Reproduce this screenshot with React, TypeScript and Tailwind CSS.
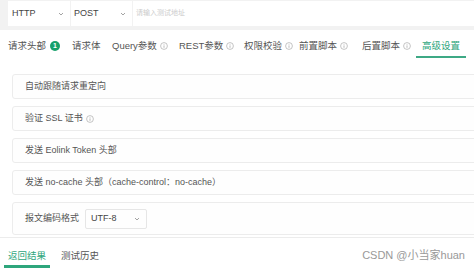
const font = "font-['Liberation_Sans','Noto_Sans_CJK_SC',sans-serif]";

function Chevron() {
  return (
    <svg width="6" height="4" viewBox="0 0 6 4" className="text-[#999]">
      <path d="M1 1l2 2 2-2" fill="none" stroke="currentColor" strokeWidth="0.9" />
    </svg>
  );
}

function Info() {
  return (
    <svg width="8" height="8" viewBox="0 0 8 8" className="ml-[3px] shrink-0 text-[#aaa]">
      <circle cx="4" cy="4" r="3.4" fill="none" stroke="currentColor" strokeWidth="0.7" />
      <path d="M4 3.4v2.4M4 2.2v0.6" stroke="currentColor" strokeWidth="0.8" />
    </svg>
  );
}

function Tab({ label, info, width }: { label: string; info?: boolean; width: string }) {
  return (
    <div className={`flex h-full shrink-0 items-center whitespace-nowrap border-b-2 border-transparent text-[#555] ${width}`}>
      <span>{label}</span>
      {info && <Info />}
    </div>
  );
}

function Card({ children, tall }: { children: React.ReactNode; tall?: boolean }) {
  return (
    <div
      className={`-mr-4 flex items-center whitespace-nowrap rounded-[3px] border border-[#ececec] bg-[#fefefe] pl-[12px] text-[9px] text-[#555] ${
        tall ? "h-[33px]" : "h-[25px]"
      }`}
    >
      {children}
    </div>
  );
}

export default function App() {
  return (
    <div className={`h-[268px] w-[474px] overflow-hidden bg-white ${font}`}>
      {/* address bar */}
      <div className="bg-[#f2f2f2] pl-[8px] pt-[1px] pb-[4px]">
        <div className="flex h-[25px] gap-px text-[9px] text-[#444]">
          <div className="flex w-[62px] items-center justify-between bg-white pl-[4px] pr-[6px]">
            <span>HTTP</span>
            <Chevron />
          </div>
          <div className="flex w-[61px] items-center justify-between bg-white pl-[3px] pr-[6px]">
            <span>POST</span>
            <Chevron />
          </div>
          <div className="flex flex-1 items-center bg-white pl-[3px] text-[7px] text-[#ccc]">
            请输入测试地址
          </div>
        </div>
      </div>

      {/* tabs */}
      <div className="flex h-[28px] items-end pl-[8px] pt-[6px] text-[9.5px]">
        <div className="flex h-full w-[64px] shrink-0 items-center whitespace-nowrap border-b-2 border-transparent text-[#555]">
          <span>请求头部</span>
          <span className="ml-[4px] flex h-[10px] w-[10px] items-center justify-center rounded-full bg-[#17a06b] text-[7px] font-bold text-white">
            1
          </span>
        </div>
        <Tab label="请求体" width="w-[40px]" />
        <Tab label="Query参数" info width="w-[67px]" />
        <Tab label="REST参数" info width="w-[65px]" />
        <Tab label="权限校验" info width="w-[55px]" />
        <Tab label="前置脚本" info width="w-[63px]" />
        <Tab label="后置脚本" info width="w-[54px]" />
        <div className="flex h-full shrink-0 items-center whitespace-nowrap border-b-2 border-[#3ea985] px-[6px] text-[#2ea67c]">
          高级设置
        </div>
      </div>

      {/* settings cards */}
      <div className="flex flex-col gap-[7px] pl-[12px] pt-[16px]">
        <Card>自动跟随请求重定向</Card>
        <Card>
          验证 SSL 证书
          <Info />
        </Card>
        <Card>发送 Eolink Token 头部</Card>
        <Card>发送 no-cache 头部（cache-control：no-cache）</Card>
        <Card tall>
          <span>报文编码格式</span>
          <div className="ml-[6px] flex h-[20px] w-[62px] items-center justify-between rounded-[2px] border border-[#e6e6e6] pl-[5px] pr-[6px] text-[9px] text-[#444]">
            <span>UTF-8</span>
            <Chevron />
          </div>
        </Card>
      </div>

      {/* result tabs */}
      <div className="mt-[2px] flex h-[31px] items-end justify-between border-t border-[#ececec] pl-[4px] pr-[9px] text-[9.5px]">
        <div className="flex h-[20px] items-end gap-[11px]">
          <div className="flex h-full items-center border-b-[3px] border-[#2ea67c] px-[4px] text-[#2ea67c]">
            返回结果
          </div>
          <div className="flex h-full items-center border-b-[3px] border-transparent text-[#555]">
            测试历史
          </div>
        </div>
        <div className="flex h-[22px] items-center pb-[3px] text-[11px] text-[#999]">
          CSDN @小当家huan
        </div>
      </div>
    </div>
  );
}
